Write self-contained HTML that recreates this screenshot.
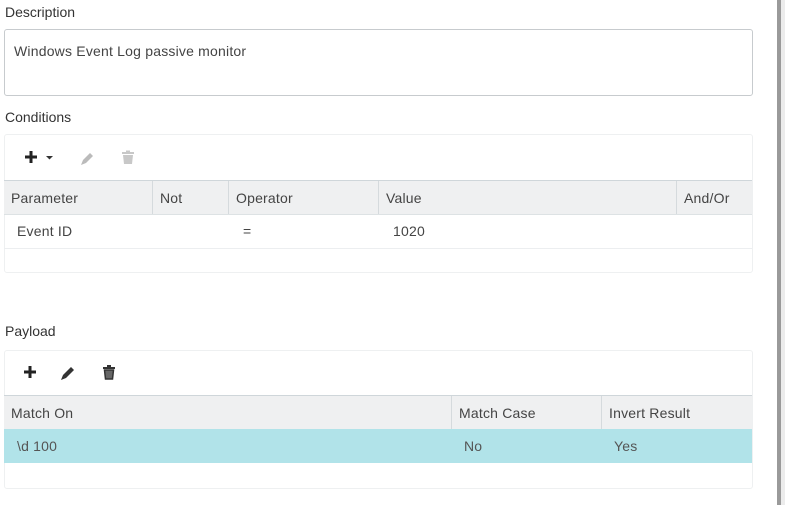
<!DOCTYPE html>
<html><head><style>
body{margin:0;width:785px;height:505px;background:#fff;position:relative;font-family:"Liberation Sans",sans-serif;font-size:14px;color:#444;overflow:hidden}
.a{position:absolute}
.lbl{left:5px;color:#333;font-size:14px}
.box{border:1px solid #eef0f1;border-radius:3px}
.hd{background:#eff0f1;border-top:1px solid #cfd6da;border-bottom:1px solid #dde2e4}
.c{position:absolute;top:0;height:100%;line-height:34px;padding-left:7px;box-sizing:border-box;border-left:1px solid #d5dadd;letter-spacing:0.2px}
.r .c{border-left:none}
</style></head><body>
<div class="a" style="left:777px;top:0;width:4px;height:505px;background:#9a9a9a"></div>
<div class="a" style="left:781px;top:0;width:4px;height:505px;background:#ececec"></div>
<div class="a lbl" style="top:4px">Description</div>
<div class="a" style="left:4px;top:29px;width:747px;height:65px;border:1px solid #c7cbce;border-radius:3px"></div>
<div class="a" style="left:14px;top:43px;color:#444;letter-spacing:0.2px">Windows Event Log passive monitor</div>
<div class="a lbl" style="top:109px">Conditions</div>
<div class="a box" style="left:4px;top:134px;width:747px;height:137px"></div>
<svg class="a" style="left:22px;top:148px" width="120" height="18">
<path d="M3 9h12M9 3v12" stroke="#222" stroke-width="3"/>
<path d="M24 8h7l-3.5 3.5z" fill="#333"/>
<path d="M59 17l2-5 7-7 3 3-7 7z" fill="#bbb"/>
<path d="M101 7h10l-1 9h-8z" fill="#c8c8c8"/><rect x="100" y="4" width="12" height="2" fill="#c8c8c8"/><rect x="104" y="2.5" width="4" height="2" fill="#c8c8c8"/>
</svg>
<div class="a hd" style="left:4px;top:180px;width:748px;height:33px">
<div class="c" style="left:0;width:148px;border-left:none">Parameter</div>
<div class="c" style="left:148px;width:76px">Not</div>
<div class="c" style="left:224px;width:150px">Operator</div>
<div class="c" style="left:374px;width:298px">Value</div>
<div class="c" style="left:672px;width:76px">And/Or</div>
</div>
<div class="a r" style="left:4px;top:214px;width:748px;height:34px;border-bottom:1px solid #eceef0">
<div class="c" style="left:6px">Event ID</div>
<div class="c" style="left:232px">=</div>
<div class="c" style="left:382px">1020</div>
</div>
<div class="a lbl" style="top:323px">Payload</div>
<div class="a box" style="left:4px;top:350px;width:747px;height:137px"></div>
<svg class="a" style="left:20px;top:362px" width="110" height="20">
<path d="M4 10h12M10 4v12" stroke="#222" stroke-width="3"/>
<path d="M41 18l2-5 8-8 3 3-8 8z" fill="#333"/>
<path d="M84.5 8h9l-1 9h-7z" fill="#666" stroke="#333" stroke-width="1.5"/><rect x="83" y="5" width="12" height="2" fill="#333"/><rect x="87" y="3" width="4" height="2" fill="#333"/>
</svg>
<div class="a hd" style="left:4px;top:395px;width:748px;height:33px">
<div class="c" style="left:0;width:447px;border-left:none">Match On</div>
<div class="c" style="left:447px;width:150px">Match Case</div>
<div class="c" style="left:597px;width:151px">Invert Result</div>
</div>
<div class="a r" style="left:4px;top:429px;width:748px;height:34px;background:#b1e3e9;color:#555">
<div class="c" style="left:6px">\d 100</div>
<div class="c" style="left:453px">No</div>
<div class="c" style="left:603px">Yes</div>
</div>
</body></html>
